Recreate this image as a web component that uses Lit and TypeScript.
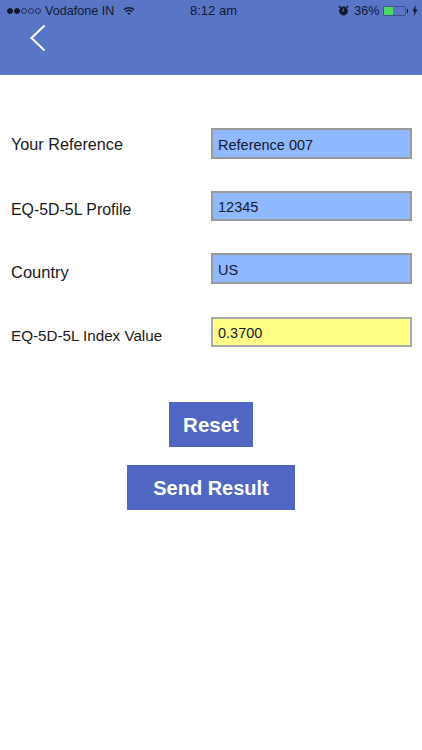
import { LitElement, html, css } from "lit";
import { customElement } from "lit/decorators.js";

const rows = [
  { label: "Your Reference", value: "Reference 007", cls: "blue", lc: "l1" },
  { label: "EQ-5D-5L Profile", value: "12345", cls: "blue", lc: "l2" },
  { label: "Country", value: "US", cls: "blue", lc: "l3" },
  { label: "EQ-5D-5L Index Value", value: "0.3700", cls: "yellow", lc: "l4" },
];

@customElement("app-root")
export class AppRoot extends LitElement {
  static styles = css`
    :host { display: block; width: 422px; height: 750px; background: #fff; overflow: hidden;
      font-family: "Liberation Sans", Arial, sans-serif; color: #111; }
    .header { height: 75px; box-sizing: border-box; background: #5875c6; }
    .status { height: 21px; display: grid; grid-template-columns: 1fr auto 1fr; align-items: center;
      padding: 0 4px 0 7px; font-size: 12.6px; color: #14182e; }
    .left, .right { display: flex; align-items: center; }
    .right { justify-content: flex-end; }
    .dots { display: flex; gap: 1px; margin-right: 4px; }
    .dot { width: 6px; height: 6px; border-radius: 50%; box-sizing: border-box; border: 0.7px solid #14182e; opacity: .75; }
    .dot.on { background: #14182e; opacity: 1; }
    .wifi { margin-left: 9px; }
    .time { font-size: 13px; margin-left: 2px; }
    .alarm { margin-right: 5px; }
    .batt { margin-left: 3px; width: 23px; height: 10px; border: 1px solid #3f5190; border-radius: 2px; box-sizing: border-box; padding: 0; }
    .batt i { display: block; width: 9px; height: 100%; background: #4cd964; }
    .nub { width: 1.5px; height: 4px; background: #14182e; margin: 0 4px 0 1px; }
    .back { display: block; margin: 3px 0 0 28.5px; }
    .form { padding: 53px 10px 0 11px; display: flex; flex-direction: column; gap: 32px; }
    .row { display: flex; justify-content: space-between; height: 30.5px; }
    .row:nth-child(4) { margin-top: 1px; }
    .label { color: #1a1a1a; align-self: center; position: relative; }
    .l1 { font-size: 16.2px; top: 1px; }
    .l2 { font-size: 15.9px; top: 4px; }
    .l3 { font-size: 16.5px; top: 4px; }
    .l4 { font-size: 15.2px; top: 4px; }
    .field { width: 201px; box-sizing: border-box; border: 2px solid #9a9a9a; display: flex;
      align-items: center; padding: 3px 0 0 5px; font-size: 14.5px; color: #14182e; }
    .blue { background: #90b8ff; }
    .yellow { background: #ffff88; border-color: #aaa; }
    .buttons { display: flex; flex-direction: column; align-items: center; gap: 18px; margin-top: 54.5px; }
    .btn { height: 45px; box-sizing: border-box; padding-top: 2px; display: flex; align-items: center; justify-content: center;
      background: #4f67c2; color: #fff; font-weight: bold; font-size: 20px; }
    .reset { width: 84px; font-size: 20.5px; }
    .send { width: 168px; }
  `;

  render() {
    return html`
      <div class="header">
        <div class="status">
          <div class="left">
            <span class="dots">
              <span class="dot on"></span><span class="dot on"></span><span class="dot"></span><span class="dot"></span><span class="dot"></span>
            </span>
            <span>Vodafone IN</span>
            <svg class="wifi" width="12" height="10" viewBox="0 0 14 10" fill="none" stroke="#14182e" stroke-width="1.6">
              <path d="M1 3.6C4.4.4 9.6.4 13 3.6"/><path d="M3.2 5.8c2.2-2 5.4-2 7.6 0"/><path d="M7 9.8 4.9 7.7c1.2-1 3-1 4.2 0z" fill="#14182e" stroke="none"/>
            </svg>
          </div>
          <div class="time">8:12 am</div>
          <div class="right">
            <svg class="alarm" width="11" height="11" viewBox="0 0 11 11">
              <circle cx="5.5" cy="6" r="4.4" fill="#14182e"/>
              <path d="M1 2.6 2.6 1M10 2.6 8.4 1" stroke="#14182e" stroke-width="1.5"/>
              <path d="M5.5 3.5V6H3.8" stroke="#5875c6" stroke-width=".8" fill="none"/>
            </svg>
            <span>36%</span>
            <span class="batt"><i></i></span>
            <span class="nub"></span>
            <svg width="6" height="11" viewBox="0 0 6 11"><path d="M3.8 0 .4 6.2h2L1.8 11 5.6 4.4H3.4z" fill="#14182e"/></svg>
          </div>
        </div>
        <svg class="back" width="18" height="28" viewBox="0 0 18 28" fill="none" stroke="#fff" stroke-width="2">
          <path d="M15.5 1.5 2.5 14l13 12.5"/>
        </svg>
      </div>
      <div class="form">
        ${rows.map(
          (r) => html`<div class="row">
            <span class="label ${r.lc}">${r.label}</span>
            <span class="field ${r.cls}">${r.value}</span>
          </div>`
        )}
      </div>
      <div class="buttons">
        <div class="btn reset">Reset</div>
        <div class="btn send">Send Result</div>
      </div>
    `;
  }
}
